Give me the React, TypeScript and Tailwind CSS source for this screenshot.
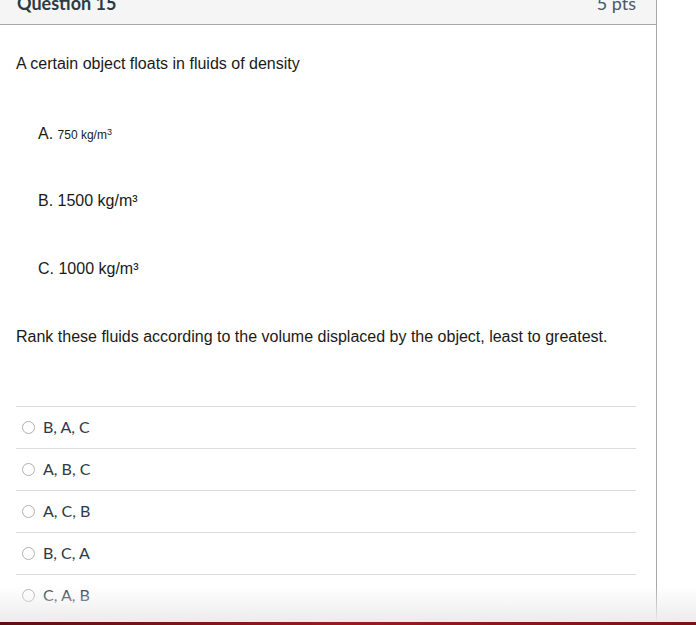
import React from 'react';

const options = ['B, A, C', 'A, B, C', 'A, C, B', 'B, C, A', 'C, A, B'];

export default function App() {
  return (
    <div className="relative h-[625px] w-[696px] overflow-hidden bg-white">
      <div className="h-full w-[657px] border-r border-[#a8a8a8]">
        {/* Header */}
        <div className="flex h-[25px] items-end justify-between overflow-hidden border-b border-[#a8a8a8] bg-[#f5f5f5] px-[17px] font-['Lato',sans-serif] text-[#2d3b45]">
          <h2 className="mb-[10px] text-[18px] font-bold leading-[22px]">Question 15</h2>
          <span className="mb-[10px] mr-[3px] text-[18px] leading-[22px] text-[#4b5863]">5 pts</span>
        </div>

        {/* Question text */}
        <div className="px-4 font-['Liberation_Sans',Arial,sans-serif] text-[16px] leading-[18px] text-[#1a1a1a]">
          <p className="mt-[30px]">A certain object floats in fluids of density</p>
          <p className="mt-[52px] pl-[22px]">
            A. <span className="text-[12px]">750 kg/m<sup className="text-[9px]">3</sup></span>
          </p>
          <p className="mt-[48px] pl-[22px]">B. 1500 kg/m³</p>
          <p className="mt-[50px] pl-[22px]">C. 1000 kg/m³</p>
          <p className="mt-[50px]">
            Rank these fluids according to the volume displaced by the object, least to greatest.
          </p>
        </div>

        {/* Answers */}
        <div className="mx-4 mt-[60px] w-[620px] font-['Lato',sans-serif] text-[16px] text-[#2d3b45]">
          {options.map((opt) => (
            <label
              key={opt}
              className="flex h-[42px] items-center border-t border-[#dcdcdc] pb-[2px] pl-[6px]"
            >
              <span className="mt-[2px] h-[13px] w-[13px] rounded-full border border-[#b0b0b0] bg-white" />
              <span className="ml-[8px]">{opt}</span>
            </label>
          ))}
        </div>
      </div>

      {/* bottom fade + footer strip */}
      <div className="pointer-events-none absolute bottom-[3px] left-0 h-[36px] w-full bg-gradient-to-b from-white/0 to-[#ececec]" />
      <div className="absolute bottom-0 left-0 h-[3px] w-full bg-gradient-to-r from-[#5a1010] via-[#9b1b1b] to-[#7a1212]" />
    </div>
  );
}
